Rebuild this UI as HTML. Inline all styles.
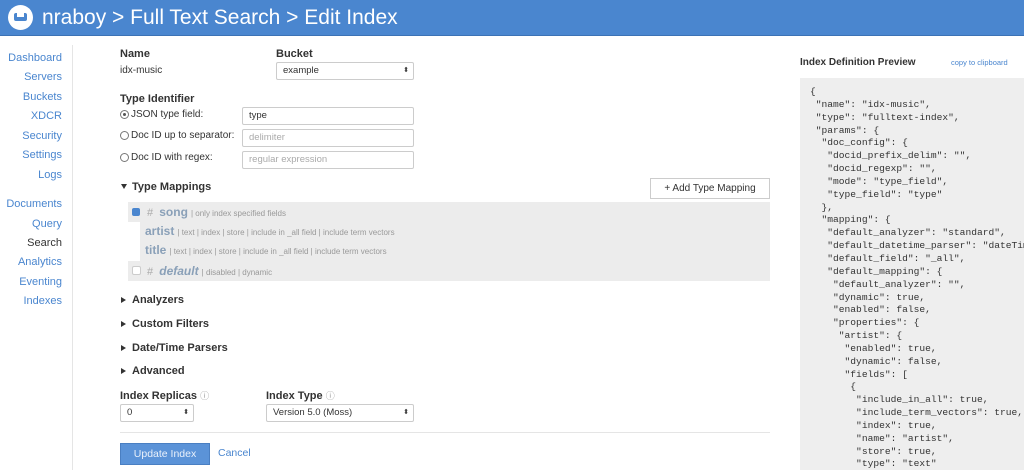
<!DOCTYPE html><html><head><style>
body{margin:0;width:1024px;height:470px;overflow:hidden;background:#fff;font-family:"Liberation Sans",sans-serif;color:#333;position:relative}
.a{position:absolute;white-space:nowrap}
.hdr{position:absolute;left:0;top:0;width:1024px;height:35px;background:#4a86cf;border-bottom:1px solid #3c72b5}
.nav{position:absolute;right:962px;font-size:11px;color:#4a86cf;text-align:right}
.b{font-weight:bold;font-size:11px;color:#333}
.s{font-size:10px}
.in{position:absolute;border:1px solid #ccc;border-radius:2px;height:16px;font-size:9.5px;line-height:16px;padding-left:6px;box-sizing:content-box;background:#fff}
.ph{color:#aaa}
.rad{position:absolute;width:7px;height:7px;border:1px solid #777;border-radius:50%}
.row{position:absolute;background:#ececec;border-bottom:1px solid #fff}
.g{color:#999;font-size:8px;font-weight:normal}
.t{font-weight:bold;color:#8aa0b8;font-size:12px}
.tri{display:inline-block;width:0;height:0;border-top:3.5px solid transparent;border-bottom:3.5px solid transparent;border-left:5px solid #333;margin-right:6px}
pre{margin:0;font-family:"Liberation Mono",monospace;font-size:9.6px;line-height:12.85px;color:#333}
</style></head><body>
<div class="hdr"></div>
<div class="a" style="left:8px;top:5px;width:25px;height:25px;border-radius:50%;background:#fff"></div>
<div class="a" style="left:14px;top:13px;width:13px;height:8px;background:#4a86cf;border-radius:2px"></div>
<div class="a" style="left:17px;top:13px;width:7px;height:4px;background:#fff"></div>
<div class="a" style="left:42px;top:6px;font-size:21px;color:#fff">nraboy &gt; Full Text Search &gt; Edit Index</div>
<div class="a" style="left:72px;top:45px;width:1px;height:425px;background:#e5e5e5"></div>
<div class="nav" style="top:52px">Dashboard</div>
<div class="nav" style="top:71px">Servers</div>
<div class="nav" style="top:91px">Buckets</div>
<div class="nav" style="top:110px">XDCR</div>
<div class="nav" style="top:130px">Security</div>
<div class="nav" style="top:149px">Settings</div>
<div class="nav" style="top:169px">Logs</div>
<div class="nav" style="top:198px">Documents</div>
<div class="nav" style="top:218px">Query</div>
<div class="nav" style="top:237px;color:#333">Search</div>
<div class="nav" style="top:256px">Analytics</div>
<div class="nav" style="top:276px">Eventing</div>
<div class="nav" style="top:295px">Indexes</div>

<div class="a b" style="left:120px;top:48px">Name</div>
<div class="a s" style="left:120px;top:65px">idx-music</div>
<div class="a b" style="left:276px;top:48px">Bucket</div>
<div class="in" style="left:276px;top:62px;width:130px">example<span style="position:absolute;right:4px;font-size:7px">⬍</span></div>
<div class="a b" style="left:120px;top:93px">Type Identifier</div>
<div class="rad" style="left:120px;top:110px"><div style="position:absolute;left:2px;top:2px;width:3px;height:3px;border-radius:50%;background:#555"></div></div>
<div class="a s" style="left:131px;top:109px">JSON type field:</div>
<div class="in" style="left:242px;top:107px;width:164px">type</div>
<div class="rad" style="left:120px;top:131px"></div>
<div class="a s" style="left:131px;top:130px">Doc ID up to separator:</div>
<div class="in ph" style="left:242px;top:129px;width:164px">delimiter</div>
<div class="rad" style="left:120px;top:153px"></div>
<div class="a s" style="left:131px;top:152px">Doc ID with regex:</div>
<div class="in ph" style="left:242px;top:151px;width:164px">regular expression</div>

<div class="a b" style="left:121px;top:181px"><span style="display:inline-block;border-left:3.5px solid transparent;border-right:3.5px solid transparent;border-top:5px solid #333;margin-right:5px;vertical-align:1px"></span>Type Mappings</div>
<div class="a" style="left:650px;top:178px;width:118px;height:19px;border:1px solid #ccc;font-size:10px;line-height:19px;text-align:center">+ Add Type Mapping</div>
<div class="row" style="left:128px;top:202px;width:642px;height:20px"></div>
<div class="row" style="left:140px;top:222px;width:630px;height:19px"></div>
<div class="row" style="left:140px;top:241px;width:630px;height:20px"></div>
<div class="row" style="left:128px;top:261px;width:642px;height:20px"></div>
<div class="a" style="left:132px;top:208px;width:8px;height:8px;background:#4a86cf;border-radius:2px"></div>
<div class="a" style="left:147px;top:205px;font-size:11px"><span style="color:#aaa">#</span>&nbsp; <span class="t">song</span> <span class="g">| only index specified fields</span></div>
<div class="a" style="left:145px;top:224px;font-size:11px"><span class="t">artist</span> <span class="g">| text | index | store | include in _all field | include term vectors</span></div>
<div class="a" style="left:145px;top:243px;font-size:11px"><span class="t">title</span> <span class="g">| text | index | store | include in _all field | include term vectors</span></div>
<div class="a" style="left:132px;top:266px;width:7px;height:7px;border:1px solid #ccc;background:#fff;border-radius:2px"></div>
<div class="a" style="left:147px;top:264px;font-size:11px"><span style="color:#aaa">#</span>&nbsp; <i class="t">default</i> <span class="g">| disabled | dynamic</span></div>

<div class="a b" style="left:121px;top:294px"><span class="tri"></span>Analyzers</div>
<div class="a b" style="left:121px;top:318px"><span class="tri"></span>Custom Filters</div>
<div class="a b" style="left:121px;top:342px"><span class="tri"></span>Date/Time Parsers</div>
<div class="a b" style="left:121px;top:365px"><span class="tri"></span>Advanced</div>
<div class="a b" style="left:120px;top:389px">Index Replicas <span style="color:#999;font-weight:normal;font-size:9px">ⓘ</span></div>
<div class="a b" style="left:266px;top:389px">Index Type <span style="color:#999;font-weight:normal;font-size:9px">ⓘ</span></div>
<div class="in" style="left:120px;top:404px;width:66px">0<span style="position:absolute;right:4px;font-size:7px">⬍</span></div>
<div class="in" style="left:266px;top:404px;width:140px">Version 5.0 (Moss)<span style="position:absolute;right:4px;font-size:7px">⬍</span></div>
<div class="a" style="left:120px;top:432px;width:650px;height:1px;background:#e5e5e5"></div>
<div class="a" style="left:120px;top:443px;width:88px;height:20px;background:#5b93d8;border:1px solid #4a7fc2;color:#eaf1fb;font-size:10.5px;line-height:20px;text-align:center">Update Index</div>
<div class="a" style="left:218px;top:447px;font-size:10.5px;color:#4a86cf">Cancel</div>

<div class="a b" style="left:800px;top:57px;font-size:10px">Index Definition Preview</div>
<div class="a" style="left:951px;top:58px;font-size:7.5px;color:#4a86cf">copy to clipboard</div>
<div class="a" style="left:800px;top:78px;width:224px;height:392px;background:#eee;overflow:hidden">
<pre style="padding:8px 0 0 10px">{
 "name": "idx-music",
 "type": "fulltext-index",
 "params": {
  "doc_config": {
   "docid_prefix_delim": "",
   "docid_regexp": "",
   "mode": "type_field",
   "type_field": "type"
  },
  "mapping": {
   "default_analyzer": "standard",
   "default_datetime_parser": "dateTimeOptional",
   "default_field": "_all",
   "default_mapping": {
    "default_analyzer": "",
    "dynamic": true,
    "enabled": false,
    "properties": {
     "artist": {
      "enabled": true,
      "dynamic": false,
      "fields": [
       {
        "include_in_all": true,
        "include_term_vectors": true,
        "index": true,
        "name": "artist",
        "store": true,
        "type": "text"</pre></div>
</body></html>
